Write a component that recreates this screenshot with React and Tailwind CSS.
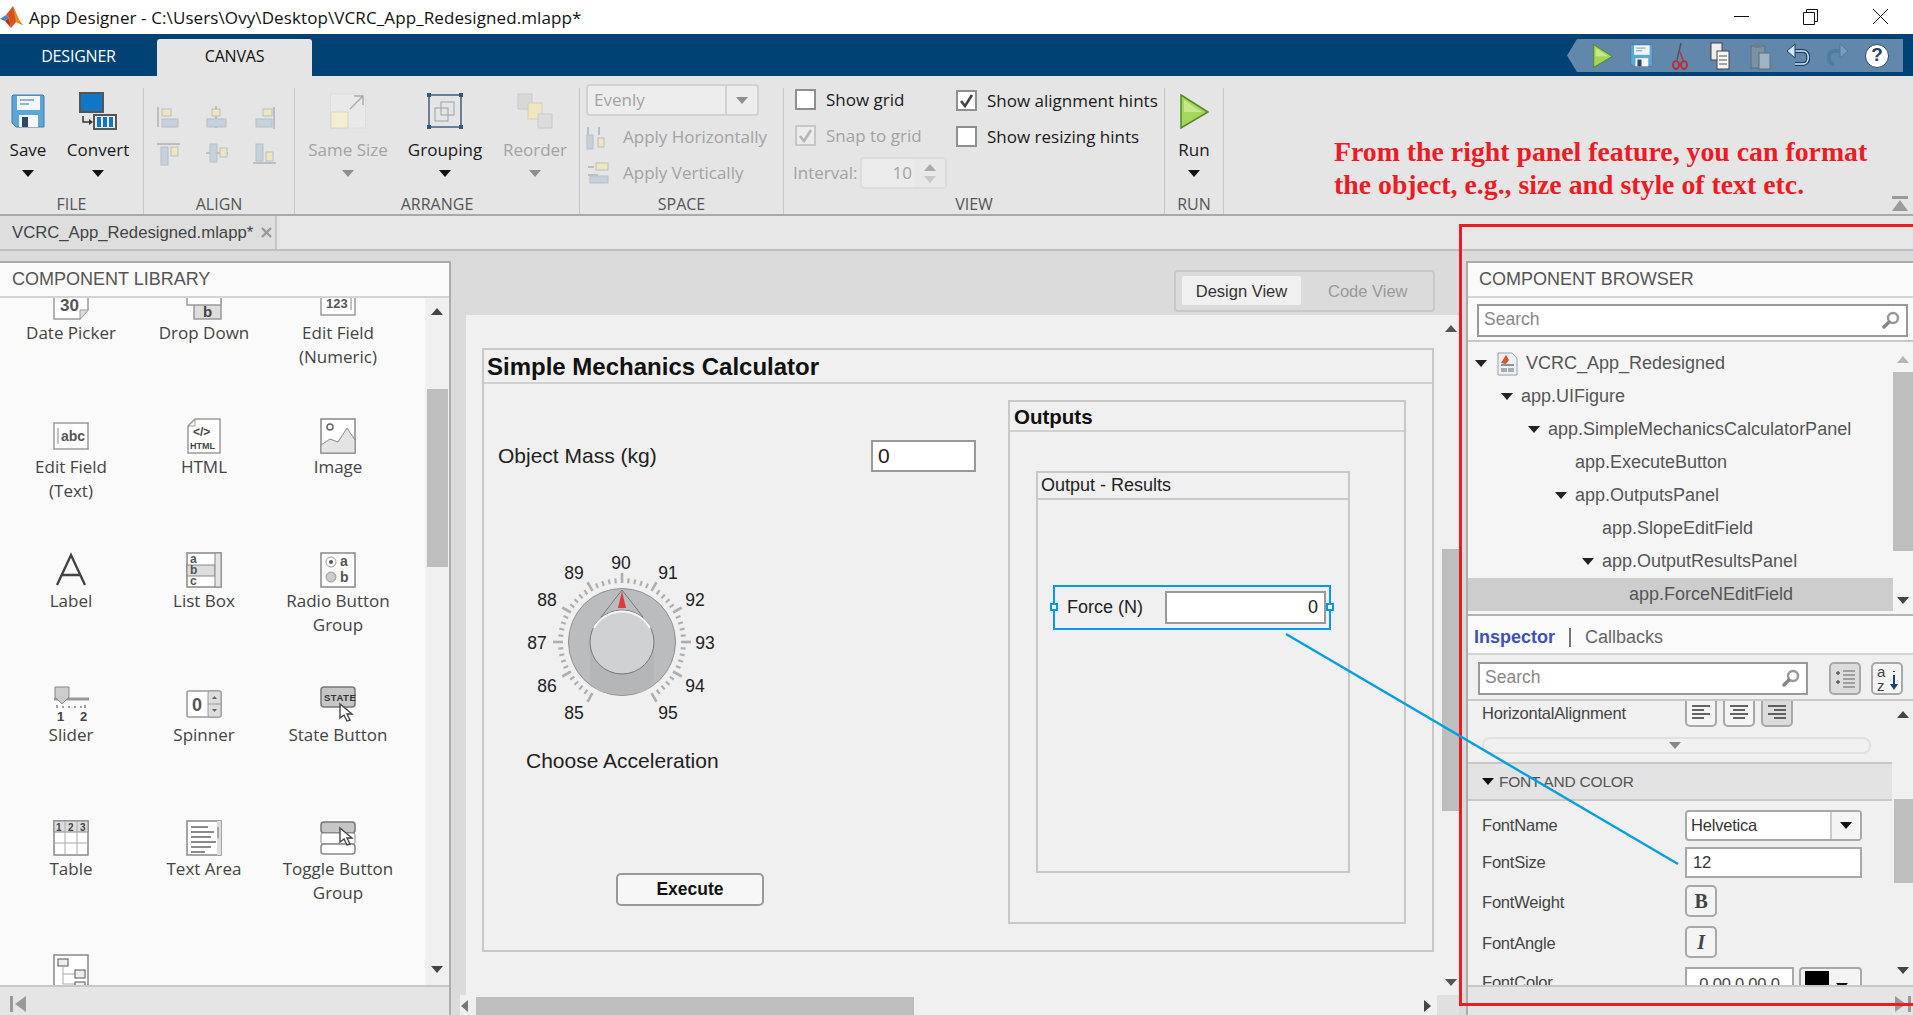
import React from "react";

const Tri = ({ dir = "down", color = "#111", className = "" }) => {
  const pts = { down: "0,0 12,0 6,7", up: "0,7 12,7 6,0", left: "7,0 7,12 0,6", right: "0,0 0,12 7,6" };
  const vertical = dir === "down" || dir === "up";
  return (
    <svg className={`block shrink-0 ${className}`} width={vertical ? 12 : 7} height={vertical ? 7 : 12}>
      <polygon points={pts[dir]} fill={color} />
    </svg>
  );
};

const SearchGlass = () => (
  <svg width="18" height="18" viewBox="0 0 18 18" className="shrink-0">
    <circle cx="11" cy="7" r="5" fill="none" stroke="#999" strokeWidth="2.5" />
    <line x1="7" y1="11" x2="2" y2="16" stroke="#888" strokeWidth="3.5" strokeLinecap="round" />
  </svg>
);

const MatlabLogo = () => (
  <svg width="24" height="24" viewBox="0 0 24 24">
    <polygon points="0,14 6,10 9,13 5,16" fill="#4b86c5" />
    <polygon points="6,10 13,1 19,15 23,20 16,17 11,23 9,13" fill="#d9531e" />
    <polygon points="13,1 19,15 23,20 16,17" fill="#f08a24" />
    <polygon points="9,13 11,23 5,16" fill="#a93a14" />
  </svg>
);

const SaveIcon = ({ size = 34 }) => (
  <svg width={size} height={size} viewBox="0 0 34 34">
    <path d="M2 1h30l1 1v31H5l-4-4V2z" fill="#5da6d6" stroke="#3f7aa6" />
    <rect x="6" y="2" width="23" height="14" fill="#f2f6fa" />
    <rect x="9" y="5" width="14" height="2" fill="#8fb4d0" />
    <rect x="9" y="9" width="9" height="2" fill="#8fb4d0" />
    <rect x="8" y="21" width="19" height="12" fill="#f5f7f9" />
    <rect x="11" y="23" width="6" height="10" fill="#2f4a62" />
  </svg>
);

const ConvertIcon = () => (
  <svg width="38" height="38" viewBox="0 0 38 38">
    <rect x="1" y="1" width="23" height="19" fill="#1077c8" stroke="#555" strokeWidth="2" />
    <rect x="15" y="23" width="22" height="14" fill="#eee" stroke="#555" strokeWidth="2" />
    <rect x="18" y="25" width="4" height="10" fill="#1077c8" />
    <rect x="24" y="25" width="4" height="10" fill="#1077c8" />
    <rect x="30" y="25" width="4" height="10" fill="#1077c8" />
    <path d="M4 24v6h7" fill="none" stroke="#333" strokeWidth="1.5" />
    <polygon points="10,27 14,30 10,33" fill="#333" />
  </svg>
);

const AlignIcon = ({ kind }) => {
  const y = "#efe6bf";
  const b = "#c5d2de";
  const g = "#adb2b7";
  const e = "#b8bfc6";
  const shapes = {
    a: [["l", 2, 2, 2, 22], ["r", 6, 4, 9, 7, y], ["r", 6, 14, 16, 8, b]],
    b: [["l", 12, 1, 12, 23], ["r", 8, 4, 8, 7, y], ["r", 3, 14, 19, 8, b]],
    c: [["l", 22, 2, 22, 24], ["r", 11, 4, 9, 7, y], ["r", 4, 14, 16, 8, b]],
    d: [["l", 1, 2, 24, 2], ["r", 5, 5, 7, 18, b], ["r", 15, 5, 7, 9, y]],
    e: [["l", 2, 11, 24, 11], ["r", 6, 2, 7, 18, b], ["r", 16, 6, 7, 9, y]],
    f: [["l", 1, 21, 24, 21], ["r", 4, 2, 7, 17, b], ["r", 14, 10, 7, 9, y]],
    h: [["l", 2, 2, 2, 10], ["l", 13, 2, 13, 10], ["r", 1, 10, 6, 14, b], ["r", 12, 13, 6, 9, y]],
    v: [["l", 2, 6, 8, 6], ["l", 2, 14, 12, 14], ["r", 10, 2, 12, 7, y], ["r", 4, 15, 18, 7, b]],
  };
  return (
    <svg width="25" height="25" viewBox="0 0 25 25">
      {shapes[kind].map((s, i) =>
        s[0] === "l" ? (
          <line key={i} x1={s[1]} y1={s[2]} x2={s[3]} y2={s[4]} stroke={g} strokeWidth="1.5" />
        ) : (
          <rect key={i} x={s[1]} y={s[2]} width={s[3]} height={s[4]} fill={s[5]} stroke={e} />
        )
      )}
    </svg>
  );
};

const SameSizeIcon = () => (
  <svg width="36" height="36" viewBox="0 0 36 36">
    <rect x="0.5" y="1" width="35" height="34" fill="#e9e9e9" stroke="#dedede" />
    <rect x="1" y="19" width="17" height="16" fill="#f3eed2" stroke="#d9d5be" />
    <path d="M20 16 33 3M24 3h9v9" fill="none" stroke="#a9a9a9" strokeWidth="1.4" />
  </svg>
);

const GroupingIcon = () => (
  <svg width="36" height="36" viewBox="0 0 36 36">
    <rect x="2" y="2" width="32" height="32" fill="none" stroke="#4b6786" strokeWidth="1.6" />
    <rect x="14" y="9" width="13" height="13" fill="none" stroke="#98a2ad" />
    <rect x="8" y="15" width="13" height="13" fill="none" stroke="#98a2ad" />
    <rect x="0" y="0" width="4" height="4" fill="#33567f" />
    <rect x="32" y="0" width="4" height="4" fill="#33567f" />
    <rect x="0" y="32" width="4" height="4" fill="#33567f" />
    <rect x="32" y="32" width="4" height="4" fill="#33567f" />
  </svg>
);

const ReorderIcon = () => (
  <svg width="36" height="36" viewBox="0 0 36 36">
    <rect x="1" y="1" width="14" height="15" fill="#d8d8d8" stroke="#c9c9c9" />
    <rect x="11" y="10" width="14" height="16" fill="#efe6bf" stroke="#d5d0b6" />
    <rect x="21" y="21" width="14" height="14" fill="#dcdcdc" stroke="#c9c9c9" />
  </svg>
);

const PlayIcon = ({ w = 29, h = 35 }) => (
  <svg width={w} height={h} viewBox="0 0 29 35">
    <polygon points="1,1 28,18 1,34" fill="#a5d65a" stroke="#4f8a2b" strokeWidth="1.5" />
    <polygon points="4,6 22,18 4,18" fill="#c6e88a" />
  </svg>
);

const QuickAccess = () => (
  <div className="flex h-[33px] w-[336px] items-center bg-[#6188aa] [clip-path:polygon(10px_0,100%_0,100%_100%,10px_100%,0_50%)]">
    <div className="ml-[26px]"><PlayIcon w={20} h={28} /></div>
    <div className="ml-[17px]"><SaveIcon size={23} /></div>
    <svg className="ml-[19px]" width="16" height="28" viewBox="0 0 16 28">
      <line x1="9" y1="1" x2="5" y2="18" stroke="#555" strokeWidth="1.5" />
      <line x1="8" y1="10" x2="11" y2="18" stroke="#c22b3a" strokeWidth="1.5" />
      <ellipse cx="4" cy="23" rx="3" ry="4" fill="none" stroke="#c22b3a" strokeWidth="2" />
      <ellipse cx="12" cy="23" rx="3" ry="4" fill="none" stroke="#c22b3a" strokeWidth="2" />
    </svg>
    <svg className="ml-[22px]" width="20" height="28" viewBox="0 0 20 28">
      <rect x="1" y="1" width="11" height="17" fill="#eee" stroke="#444" />
      <rect x="7" y="9" width="12" height="18" fill="#f6f6f6" stroke="#444" />
      <path d="M9 14h8M9 18h8M9 22h8" stroke="#555" />
    </svg>
    <svg className="ml-[20px] opacity-50" width="21" height="28" viewBox="0 0 21 28">
      <rect x="1" y="4" width="14" height="22" fill="#9a9a9a" stroke="#555" />
      <rect x="5" y="1" width="6" height="5" fill="#777" />
      <rect x="9" y="11" width="11" height="16" fill="#ddd" stroke="#555" />
    </svg>
    <svg className="ml-[16px]" width="23" height="26" viewBox="0 0 23 26">
      <path d="M4 8h12c7 0 7 13 0 13H8" fill="none" stroke="#1d3f63" strokeWidth="4" />
      <path d="M4 8h12c7 0 7 13 0 13H8" fill="none" stroke="#d6e8f7" strokeWidth="1.5" />
      <polygon points="8,1 8,15 0,8" fill="#d6e8f7" stroke="#1d3f63" />
    </svg>
    <svg className="ml-[16px] opacity-50" width="22" height="26" viewBox="0 0 22 26">
      <path d="M18 8H8c-7 0-7 13 0 13" fill="none" stroke="#3f6f96" strokeWidth="4" />
      <polygon points="14,1 14,15 22,8" fill="#8fb2cc" stroke="#3f6f96" />
    </svg>
    <div className="ml-[17px] flex h-[24px] w-[24px] items-center justify-center rounded-full border border-[#2a4560] bg-white font-['Liberation_Sans',sans-serif] text-[19px] font-bold text-[#2d3e5c]">
      ?
    </div>
  </div>
);

const RibbonGroup = ({ label, className, children }) => (
  <div className={`flex h-[126px] shrink-0 flex-col border-r border-[#c8c8c8] ${className}`}>
    <div className="h-[106px]">{children}</div>
    <div className="text-center text-[16px] leading-[20px] text-[#555]">{label}</div>
  </div>
);

const BigButton = ({ icon, label, caret = true, disabled, className }) => (
  <div className={`flex shrink-0 flex-col items-center pt-[5px] ${className}`}>
    <div className="flex h-[36px] items-center justify-center">{icon}</div>
    <div className={`mt-[9px] h-[24px] text-[17px] leading-[24px] whitespace-nowrap ${disabled ? "text-[#a3a3a3]" : "text-[#1a1a1a]"}`}>
      {label}
    </div>
    {caret && <Tri className="mt-[8px]" color={disabled ? "#8f8f8f" : "#111"} />}
  </div>
);

const Check = ({ checked, disabled, label, className }) => (
  <div className={`flex h-[21px] items-center gap-[10px] ${className}`}>
    <div className={`flex h-[21px] w-[21px] items-center justify-center border-2 ${disabled ? "border-[#c6c6c6] bg-[#ececec]" : "border-[#8f8f8f] bg-white"}`}>
      {checked && (
        <svg width="15" height="15" viewBox="0 0 15 15">
          <path d="M2 8l4 5 7-11" fill="none" stroke={disabled ? "#b5b5b5" : "#444"} strokeWidth="2.6" />
        </svg>
      )}
    </div>
    <span className={`text-[17px] whitespace-nowrap ${disabled ? "text-[#a3a3a3]" : "text-[#1a1a1a]"}`}>{label}</span>
  </div>
);

const Ribbon = () => (
  <div className="flex h-[140px] shrink-0 border-b-2 border-[#a9a9a9] bg-[#e5e5e5] pt-[12px] font-['Open_Sans',sans-serif]">
    <RibbonGroup label="FILE" className="w-[144px]">
      <div className="flex">
        <BigButton className="w-[56px]" icon={<SaveIcon />} label="Save" />
        <BigButton className="w-[84px]" icon={<ConvertIcon />} label="Convert" />
      </div>
    </RibbonGroup>
    <RibbonGroup label="ALIGN" className="w-[151px]">
      <div className="grid grid-cols-[48px_48px_48px] justify-items-center gap-y-[12px] pt-[17px]">
        {["a", "b", "c", "d", "e", "f"].map((k) => (
          <AlignIcon key={k} kind={k} />
        ))}
      </div>
    </RibbonGroup>
    <RibbonGroup label="ARRANGE" className="w-[285px]">
      <div className="flex pl-[5px]">
        <BigButton className="w-[96px]" icon={<SameSizeIcon />} label="Same Size" disabled />
        <BigButton className="w-[98px]" icon={<GroupingIcon />} label="Grouping" />
        <BigButton className="w-[82px]" icon={<ReorderIcon />} label="Reorder" disabled />
      </div>
    </RibbonGroup>
    <RibbonGroup label="SPACE" className="w-[204px]">
      <div className="-mt-[4px] pl-[6px] text-[17px] text-[#a3a3a3]">
        <div className="flex h-[32px] w-[173px] items-stretch rounded-[4px] border-2 border-[#d2d2d2] bg-[#ededed]">
          <span className="w-[137px] pl-[6px] leading-[28px]">Evenly</span>
          <div className="flex flex-1 items-center justify-center border-l-2 border-[#d2d2d2]">
            <Tri color="#8f8f8f" />
          </div>
        </div>
        <div className="mt-[9px] flex h-[24px] items-center gap-[12px] whitespace-nowrap">
          <AlignIcon kind="h" />
          <span>Apply Horizontally</span>
        </div>
        <div className="mt-[12px] flex h-[24px] items-center gap-[12px] whitespace-nowrap">
          <AlignIcon kind="v" />
          <span>Apply Vertically</span>
        </div>
      </div>
    </RibbonGroup>
    <RibbonGroup label="VIEW" className="w-[381px]">
      <div className="flex pl-[11px]">
        <div className="w-[161px] pt-[1px]">
          <Check label="Show grid" />
          <Check label="Snap to grid" checked disabled className="mt-[15px]" />
          <div className="mt-[11px] -ml-[2px] flex items-center text-[17px] text-[#a3a3a3]">
            <span className="w-[67px]">Interval:</span>
            <div className="flex h-[32px] w-[87px] rounded-[4px] border-2 border-[#dcdcdc] bg-[#ebebeb]">
              <span className="w-[53px] pr-[3px] text-right leading-[28px]">10</span>
              <div className="flex flex-1 flex-col items-center justify-center gap-[5px] bg-[#e8e8e8]">
                <Tri dir="up" color="#a9a9a9" />
                <Tri color="#c8c8c8" />
              </div>
            </div>
          </div>
        </div>
        <div className="pt-[2px]">
          <Check label="Show alignment hints" checked />
          <Check label="Show resizing hints" className="mt-[15px]" />
        </div>
      </div>
    </RibbonGroup>
    <RibbonGroup label="RUN" className="w-[59px]">
      <BigButton icon={<PlayIcon />} label="Run" />
    </RibbonGroup>
    <div className="relative flex-1 pt-[47px] pl-[110px] font-['Liberation_Serif',serif] text-[27.8px] leading-[33px] font-bold text-[#ed1c24]">
      <div className="whitespace-nowrap">From the right panel feature, you can format</div>
      <div className="whitespace-nowrap">the object, e.g., size and style of text etc.</div>
      <svg className="absolute right-[5px] bottom-[2px]" width="16" height="16" viewBox="0 0 16 16">
        <rect x="0" y="0" width="16" height="3" fill="#9a9a9a" />
        <polygon points="8,4 16,15 0,15" fill="#9a9a9a" />
      </svg>
    </div>
  </div>
);

const IconBox = ({ children }) => (
  <svg width="36" height="36" viewBox="0 0 36 36" className="block font-['Liberation_Sans',sans-serif]">
    {children}
  </svg>
);

const componentItems = [
  {
    label: ["Date Picker"],
    icon: (
      <IconBox>
        <path d="M1 0h34v26l-8 9H1z" fill="#fff" stroke="#9a9a9a" strokeWidth="1.5" />
        <path d="M35 26h-8v9" fill="#ddd" stroke="#9a9a9a" />
        <text x="7" y="27" fontSize="17" fontWeight="700" fill="#555">30</text>
      </IconBox>
    ),
  },
  {
    label: ["Drop Down"],
    icon: (
      <IconBox>
        <rect x="8" y="12" width="27" height="23" fill="#ddd" stroke="#9a9a9a" strokeWidth="1.5" />
        <rect x="1" y="1" width="34" height="20" fill="#fff" stroke="#9a9a9a" strokeWidth="1.5" />
        <text x="17" y="33" fontSize="15" fontWeight="700" fill="#444">b</text>
      </IconBox>
    ),
  },
  {
    label: ["Edit Field", "(Numeric)"],
    icon: (
      <IconBox>
        <rect x="1" y="5" width="34" height="26" fill="#fff" stroke="#9a9a9a" strokeWidth="1.5" />
        <text x="6" y="24" fontSize="13" fontWeight="700" fill="#555">123</text>
        <line x1="31" y1="8" x2="31" y2="26" stroke="#888" />
      </IconBox>
    ),
  },
  {
    label: ["Edit Field", "(Text)"],
    icon: (
      <IconBox>
        <rect x="1" y="5" width="34" height="26" fill="#fff" stroke="#9a9a9a" strokeWidth="1.5" />
        <line x1="5" y1="10" x2="5" y2="26" stroke="#888" />
        <text x="8" y="23" fontSize="14" fontWeight="700" fill="#555">abc</text>
      </IconBox>
    ),
  },
  {
    label: ["HTML"],
    icon: (
      <IconBox>
        <path d="M9 1h25v34H2V8z" fill="#fff" stroke="#9a9a9a" strokeWidth="1.5" />
        <path d="M9 1v7H2" fill="none" stroke="#9a9a9a" />
        <text x="7" y="18" fontSize="12" fontWeight="700" fill="#444">&lt;/&gt;</text>
        <text x="4" y="31" fontSize="9" fontWeight="700" fill="#444">HTML</text>
      </IconBox>
    ),
  },
  {
    label: ["Image"],
    icon: (
      <IconBox>
        <rect x="1" y="1" width="34" height="34" fill="#fff" stroke="#888" strokeWidth="1.5" />
        <path d="M1 27l9-6 8 3 9-14 8 12v13H1z" fill="#e4e4e4" stroke="#888" />
        <circle cx="10" cy="9" r="3" fill="none" stroke="#666" strokeWidth="1.5" />
      </IconBox>
    ),
  },
  {
    label: ["Label"],
    icon: (
      <IconBox>
        <path d="M4 33 18 3l14 30M9 23h18" fill="none" stroke="#444" strokeWidth="2.4" />
      </IconBox>
    ),
  },
  {
    label: ["List Box"],
    icon: (
      <IconBox>
        <rect x="1" y="1" width="34" height="34" fill="#fff" stroke="#888" strokeWidth="1.5" />
        <rect x="1" y="13" width="28" height="11" fill="#ddd" stroke="#888" />
        <rect x="29" y="1" width="6" height="34" fill="#e6e6e6" stroke="#888" />
        <text x="4" y="11" fontSize="12" fontWeight="700" fill="#555">a</text>
        <text x="4" y="22" fontSize="12" fontWeight="700" fill="#555">b</text>
        <text x="4" y="33" fontSize="12" fontWeight="700" fill="#555">c</text>
      </IconBox>
    ),
  },
  {
    label: ["Radio Button", "Group"],
    icon: (
      <IconBox>
        <rect x="1" y="1" width="34" height="34" fill="#fff" stroke="#888" strokeWidth="1.5" />
        <circle cx="11" cy="10" r="5" fill="#fff" stroke="#999" />
        <circle cx="11" cy="10" r="2" fill="#555" />
        <circle cx="11" cy="25" r="5" fill="#ccc" stroke="#999" />
        <text x="20" y="14" fontSize="14" fontWeight="700" fill="#555">a</text>
        <text x="20" y="30" fontSize="14" fontWeight="700" fill="#555">b</text>
      </IconBox>
    ),
  },
  {
    label: ["Slider"],
    icon: (
      <IconBox>
        <line x1="1" y1="13" x2="36" y2="13" stroke="#999" strokeWidth="3" />
        <path d="M2 1h14v10l-7 7-7-7z" fill="#ccc" stroke="#888" />
        <path d="M4 19v3M10 20v2M16 20v2M22 20v2M28 20v2M32 19v3" stroke="#666" strokeWidth="1.2" />
        <text x="4" y="35" fontSize="13" fontWeight="700" fill="#444">1</text>
        <text x="27" y="35" fontSize="13" fontWeight="700" fill="#444">2</text>
      </IconBox>
    ),
  },
  {
    label: ["Spinner"],
    icon: (
      <IconBox>
        <rect x="1" y="5" width="34" height="26" rx="2" fill="#fff" stroke="#999" strokeWidth="1.5" />
        <rect x="22" y="5" width="13" height="26" rx="2" fill="#ddd" stroke="#999" />
        <line x1="22" y1="18" x2="35" y2="18" stroke="#999" />
        <text x="6" y="25" fontSize="18" fontWeight="700" fill="#555">0</text>
        <polygon points="26,13 31,13 28.5,10" fill="#666" />
        <polygon points="26,23 31,23 28.5,26" fill="#666" />
      </IconBox>
    ),
  },
  {
    label: ["State Button"],
    icon: (
      <IconBox>
        <rect x="1" y="1" width="34" height="20" rx="3" fill="#c6c6c6" stroke="#777" strokeWidth="1.5" />
        <text x="4" y="15" fontSize="9.5" fontWeight="700" letterSpacing="0.5" fill="#333">STATE</text>
        <path d="M20 18v14l4-3 3 6 3-1-3-6h5z" fill="#fff" stroke="#444" strokeWidth="1.4" />
      </IconBox>
    ),
  },
  {
    label: ["Table"],
    icon: (
      <IconBox>
        <rect x="1" y="1" width="34" height="34" fill="#fff" stroke="#888" strokeWidth="1.5" />
        <rect x="1" y="1" width="34" height="11" fill="#ddd" stroke="#888" />
        <path d="M12 1v34M24 1v34M1 23h34" stroke="#aaa" />
        <text x="3" y="11" fontSize="10" fontWeight="700" fill="#444">1</text>
        <text x="15" y="11" fontSize="10" fontWeight="700" fill="#444">2</text>
        <text x="27" y="11" fontSize="10" fontWeight="700" fill="#444">3</text>
      </IconBox>
    ),
  },
  {
    label: ["Text Area"],
    icon: (
      <IconBox>
        <rect x="1" y="1" width="34" height="34" fill="#fff" stroke="#888" strokeWidth="1.5" />
        <rect x="31" y="1" width="4" height="34" fill="#ddd" />
        <path d="M5 7h17M5 12h23M5 17h20M5 22h25M5 27h20M5 32h14" stroke="#666" strokeWidth="1.5" />
        <line x1="32" y1="7" x2="32" y2="18" stroke="#999" strokeWidth="1.5" />
      </IconBox>
    ),
  },
  {
    label: ["Toggle Button", "Group"],
    icon: (
      <IconBox>
        <rect x="1" y="2" width="34" height="11" rx="3" fill="#c6c6c6" stroke="#777" strokeWidth="1.5" />
        <rect x="1" y="13" width="34" height="11" rx="2" fill="#fff" stroke="#888" />
        <rect x="1" y="24" width="34" height="10" rx="3" fill="#fff" stroke="#888" strokeWidth="1.5" />
        <path d="M20 8v14l4-3 3 6 3-1-3-6h5z" fill="#fff" stroke="#444" strokeWidth="1.4" />
      </IconBox>
    ),
  },
  {
    label: [""],
    icon: (
      <IconBox>
        <rect x="1" y="1" width="34" height="34" fill="#fff" stroke="#888" strokeWidth="1.5" />
        <rect x="5" y="5" width="10" height="7" fill="#eee" stroke="#555" />
        <path d="M10 12v18M10 20h12M10 30h12" stroke="#aaa" />
        <rect x="22" y="16" width="10" height="8" fill="#eee" stroke="#555" />
        <rect x="22" y="28" width="10" height="7" fill="#eee" stroke="#555" />
      </IconBox>
    ),
  },
];

const ComponentLibrary = () => (
  <div className="flex w-[451px] shrink-0 flex-col mt-[10px] border-t-2 border-r-2 border-[#acacac] bg-[#fafafa]">
    <div className="h-[35px] shrink-0 border-b-2 border-[#d4d4d4] pl-[12px] font-['Liberation_Sans',sans-serif] text-[18px] leading-[32px] text-[#555]">
      COMPONENT LIBRARY
    </div>
    <div className="flex min-h-0 flex-1">
      <div className="flex-1 overflow-hidden">
        <div className="-mt-[14px] grid grid-cols-[142px_124px_144px] font-['Open_Sans',sans-serif] text-[17px] leading-[24px] text-[#444]">
          {componentItems.map((item, i) => (
            <div key={i} className="flex h-[134px] flex-col items-center">
              {item.icon}
              <div className="mt-[1px] text-center whitespace-nowrap">
                {item.label.map((l) => (
                  <div key={l}>{l}</div>
                ))}
              </div>
            </div>
          ))}
        </div>
      </div>
      <div className="flex w-[24px] shrink-0 flex-col items-center bg-[#f0f0f0] pt-[10px] pb-[12px]">
        <Tri dir="up" color="#444" />
        <div className="mt-[74px] h-[178px] w-[21px] bg-[#bebebe]" />
        <Tri className="mt-auto" color="#444" />
      </div>
    </div>
    <div className="flex h-[30px] shrink-0 items-center border-t-2 border-[#c8c8c8] bg-[#e5e5e5] pt-[6px] pl-[10px]">
      <svg width="16" height="16" viewBox="0 0 16 16">
        <rect x="0" y="0" width="3" height="16" fill="#999" />
        <polygon points="16,0 16,16 5,8" fill="#999" />
      </svg>
    </div>
  </div>
);

const Knob = () => {
  const cx = 100;
  const cy = 94;
  const labels = [
    [85, 52, 165], [86, 25, 138], [87, 15, 95], [88, 25, 52], [89, 52, 25],
    [90, 99, 15], [91, 146, 25], [92, 173, 52], [93, 183, 95], [94, 173, 138], [95, 146, 165],
  ];
  const ticks = [];
  for (let a = -150; a <= 150; a += 6) {
    const major = a % 30 === 0;
    const r = (a * Math.PI) / 180;
    const r1 = 59;
    const r2 = major ? 69 : 64;
    ticks.push(
      <line
        key={a}
        x1={cx + r1 * Math.sin(r)}
        y1={cy - r1 * Math.cos(r)}
        x2={cx + r2 * Math.sin(r)}
        y2={cy - r2 * Math.cos(r)}
        stroke="#adafb2"
        strokeWidth={major ? 2.6 : 2.2}
      />
    );
  }
  return (
    <svg width="200" height="184" viewBox="0 0 200 184" className="block font-['Liberation_Sans',sans-serif]">
      {ticks}
      <circle cx={cx} cy={cy} r="53.5" fill="#bbbcbe" stroke="#8f9093" />
      <path d="M68 94v38q2 8 12 12q20 4 40 0q10-4 12-12V94z" fill="#b5b6b8" />
      <polygon points="100,42 79,69 121,69" fill="#bbbcbe" stroke="#77787a" />
      <polygon points="100,43 96,60 104,60" fill="#e0393f" />
      <circle cx={cx} cy={cy} r="32" fill="#d0d1d3" stroke="#77787a" />
      <path d="M72 80a32 32 0 0 1 56 0" fill="none" stroke="#f6f6f6" strokeWidth="2" />
      {labels.map(([v, x, y]) => (
        <text key={v} x={x} y={y + 6} textAnchor="middle" fontSize="17.5" fill="#222">
          {v}
        </text>
      ))}
    </svg>
  );
};

const Canvas = () => (
  <div className="min-w-0 flex-1 bg-[#f0f0f0] pt-[33px] pl-[16px]">
    <div className="h-[604px] w-[952px] border-2 border-[#c8c8c8]">
      <div className="h-[34px] border-b-2 border-[#d0d0d0] pl-[3px] text-[24px] leading-[34px] font-bold text-[#111]">
        Simple Mechanics Calculator
      </div>
      <div className="flex">
        <div className="w-[524px] shrink-0">
          <div className="mt-[56px] flex h-[32px] items-center pl-[14px] text-[21px] text-[#222]">
            <span className="w-[373px]">Object Mass (kg)</span>
            <div className="h-[32px] w-[105px] border-2 border-[#999] bg-white pl-[5px] leading-[28px]">0</div>
          </div>
          <div className="mt-[76px] ml-[38px]">
            <Knob />
          </div>
          <div className="mt-[15px] ml-[42px] text-[21px] leading-[28px] text-[#222]">Choose Acceleration</div>
          <div className="mt-[98px] ml-[132px] flex h-[33px] w-[148px] items-center justify-center rounded-[5px] border-2 border-[#999] bg-[#f7f7f7] text-[17.5px] font-bold text-[#111]">
            Execute
          </div>
        </div>
        <div className="mt-[16px] h-[524px] w-[398px] shrink-0 border-2 border-[#c8c8c8]">
          <div className="h-[30px] border-b-2 border-[#d0d0d0] pl-[4px] text-[20.5px] leading-[29px] font-bold text-[#111]">
            Outputs
          </div>
          <div className="mt-[39px] ml-[26px] h-[402px] w-[314px] border-2 border-[#c8c8c8]">
            <div className="h-[27px] border-b-2 border-[#c8c8c8] pl-[3px] text-[18px] leading-[24px] text-[#222]">
              Output - Results
            </div>
            <div className="relative mt-[85px] ml-[15px] flex h-[45px] w-[278px] items-center border-2 border-[#0098f0] pl-[12px] text-[18px] text-[#222]">
              <span className="w-[98px]">Force (N)</span>
              <div className="h-[33px] w-[161px] border-2 border-[#999] bg-white pr-[6px] text-right leading-[29px]">0</div>
              <div className="absolute top-[16px] -left-[5px] h-[8px] w-[8px] border-2 border-[#0098f0] bg-white" />
              <div className="absolute top-[16px] -right-[5px] h-[8px] w-[8px] border-2 border-[#0098f0] bg-white" />
            </div>
          </div>
        </div>
      </div>
    </div>
  </div>
);

const CanvasColumn = () => (
  <div className="flex w-[1008px] shrink-0 flex-col font-['Liberation_Sans',sans-serif]">
    <div className="flex h-[64px] shrink-0 justify-end pt-[19px] pr-[24px]">
      <div className="flex h-[42px] w-[261px] rounded-[4px] border-2 border-[#c8c8c8] pt-[4px] pl-[6px] text-[16.5px] leading-[30px]">
        <div className="h-[29px] w-[119px] rounded-[2px] bg-[#f0f0f0] text-center text-[#333]">Design View</div>
        <div className="ml-[27px] text-[#999]">Code View</div>
      </div>
    </div>
    <div className="flex min-h-0 flex-1 pl-[15px]">
      <Canvas />
      <div className="flex w-[17px] shrink-0 flex-col items-center bg-[#f0f0f0] pt-[10px] pb-[9px]">
        <Tri dir="up" color="#555" />
        <div className="mt-[217px] h-[262px] w-[17px] bg-[#bebebe]" />
        <Tri className="mt-auto" color="#555" />
      </div>
    </div>
    <div className="ml-[9px] flex h-[20px] shrink-0 items-end bg-[#f0f0f0]">
      <Tri dir="left" color="#777" className="mb-[3px] ml-[1px]" />
      <div className="ml-[8px] h-[18px] w-[438px] bg-[#bebebe]" />
      <Tri dir="right" color="#444" className="mb-[3px] ml-[510px]" />
      <div className="ml-[6px] h-[20px] flex-1 bg-[#e0e0e0]" />
    </div>
  </div>
);

const SearchBox = ({ className }) => (
  <div className={`flex h-[33px] items-center justify-between border-2 border-[#999] bg-white pr-[6px] pb-[2px] pl-[5px] text-[17.5px] text-[#888] ${className}`}>
    Search
    <SearchGlass />
  </div>
);

const treeRows = [
  { text: "VCRC_App_Redesigned", pad: "pl-[7px]", caret: true, root: true },
  { text: "app.UIFigure", pad: "pl-[33px]", caret: true },
  { text: "app.SimpleMechanicsCalculatorPanel", pad: "pl-[60px]", caret: true },
  { text: "app.ExecuteButton", pad: "pl-[107px]" },
  { text: "app.OutputsPanel", pad: "pl-[87px]", caret: true },
  { text: "app.SlopeEditField", pad: "pl-[134px]" },
  { text: "app.OutputResultsPanel", pad: "pl-[114px]", caret: true },
  { text: "app.ForceNEditField", pad: "pl-[161px] bg-[#cdcdcd]" },
];

const RootIcon = () => (
  <svg width="21" height="24" viewBox="0 0 21 24" className="mr-[8px] ml-[10px]">
    <path d="M1 1h14l5 5v17H1z" fill="#eef1f4" stroke="#9aa0a6" />
    <path d="M4 11l5-8 3 5-3 4z" fill="#d9531e" />
    <rect x="4" y="12" width="13" height="2" fill="#7f97ad" />
    <rect x="4" y="16" width="6" height="4" fill="#a5adb5" />
    <rect x="11" y="16" width="6" height="4" fill="#a5adb5" />
  </svg>
);

const SmallBtn = ({ active, children, className = "" }) => (
  <div className={`flex h-[32px] w-[32px] shrink-0 items-center justify-center rounded-[5px] border-2 border-[#a8a8a8] ${active ? "bg-[#dcdcdc]" : "bg-[#f4f4f4]"} ${className}`}>
    {children}
  </div>
);

const AlignGlyph = ({ d }) => (
  <svg width="20" height="18" viewBox="0 0 20 18">
    <path d={d} stroke="#333" strokeWidth="1.6" />
  </svg>
);

const Field = ({ label, nudge, className, children }) => (
  <div className={`flex items-center ${className}`}>
    <span className={`w-[203px] shrink-0 whitespace-nowrap ${nudge ? "pt-[2px]" : ""}`}>{label}</span>
    {children}
  </div>
);

const Inspector = () => (
  <div className="flex min-h-0 flex-1">
    <div className="flex-1 overflow-hidden bg-[#f0f0f0] text-[16.5px] tracking-[-0.2px] text-[#444]">
      <div className="flex h-[26px] items-start pl-[14px]">
        <span className="w-[203px] shrink-0 leading-[24px]">HorizontalAlignment</span>
        <div className="-mt-[6px] flex gap-[6px]">
          <SmallBtn><AlignGlyph d="M1 4h18M1 8h12M1 12h18M1 16h12" /></SmallBtn>
          <SmallBtn><AlignGlyph d="M1 4h18M4 8h12M1 12h18M4 16h12" /></SmallBtn>
          <SmallBtn active><AlignGlyph d="M1 4h18M7 8h12M1 12h18M7 16h12" /></SmallBtn>
        </div>
      </div>
      <div className="mt-[10px] ml-[14px] flex h-[17px] w-[389px] items-center justify-center rounded-[8px] border-2 border-[#e0e0e0] pr-[4px]">
        <Tri color="#888" />
      </div>
      <div className="mt-[8px] flex h-[39px] items-center border-y-2 border-[#c8c8c8] bg-[#e3e3e3] pl-[14px] text-[15.5px] text-[#555]">
        <Tri color="#111" className="mr-[5px]" />
        FONT AND COLOR
      </div>
      <div className="pl-[14px]">
        <Field label="FontName" className="mt-[9px] h-[31px]">
          <div className="flex h-[31px] w-[177px] rounded-[4px] border-2 border-[#a8a8a8] bg-white">
            <span className="flex-1 pl-[4px] leading-[27px] text-[#333]">Helvetica</span>
            <div className="flex w-[30px] items-center justify-center border-l-2 border-[#ccc] bg-[#f4f4f4]">
              <Tri color="#111" />
            </div>
          </div>
        </Field>
        <Field label="FontSize" className="mt-[6px] h-[31px]">
          <div className="h-[31px] w-[177px] border-2 border-[#a8a8a8] bg-white pl-[6px] leading-[27px] text-[#333]">12</div>
        </Field>
        <Field label="FontWeight" nudge className="mt-[7px] h-[32px]">
          <SmallBtn><span className="font-['Liberation_Serif',serif] text-[20px] font-bold text-[#444]">B</span></SmallBtn>
        </Field>
        <Field label="FontAngle" nudge className="mt-[9px] h-[32px]">
          <SmallBtn><span className="font-['Liberation_Serif',serif] text-[20px] font-bold text-[#444] italic">I</span></SmallBtn>
        </Field>
        <div className="mt-[9px] flex h-[32px] items-start">
          <span className="w-[203px] shrink-0 leading-[30px]">FontColor</span>
          <div className="h-[32px] w-[109px] border-2 border-[#a8a8a8] bg-white text-center leading-[30px]">0.00 0.00 0</div>
          <div className="ml-[5px] flex h-[32px] w-[63px] rounded-[4px] border-2 border-[#a8a8a8] bg-[#f4f4f4] pt-[2px] pl-[4px]">
            <div className="h-[14px] w-[24px] bg-black" />
            <Tri color="#111" className="mt-[12px] ml-[7px]" />
          </div>
        </div>
      </div>
    </div>
    <div className="flex w-[21px] shrink-0 flex-col items-center bg-[#f0f0f0] pt-[10px] pb-[11px]">
      <Tri dir="up" color="#444" />
      <div className="mt-[81px] ml-[2px] h-[84px] w-[19px] bg-[#bebebe]" />
      <Tri className="mt-auto" color="#444" />
    </div>
  </div>
);

const ComponentBrowser = () => (
  <div className="mt-[10px] ml-[7px] flex w-[447px] shrink-0 flex-col border-t-2 border-l-2 border-[#acacac] bg-[#fafafa] font-['Liberation_Sans',sans-serif]">
    <div className="h-[35px] shrink-0 border-b-2 border-[#d4d4d4] pl-[11px] text-[18px] leading-[32px] text-[#555]">
      COMPONENT BROWSER
    </div>
    <div className="h-[44px] shrink-0 border-b-2 border-[#c8c8c8] pt-[6px] pl-[9px]">
      <SearchBox className="w-[431px]" />
    </div>
    <div className="flex h-[274px] shrink-0 border-b-2 border-[#b4b4b4] bg-[#f5f5f5]">
      <div className="w-[425px] shrink-0 pt-[5px] text-[18px] text-[#555]">
        {treeRows.map((r) => (
          <div key={r.text} className={`flex h-[33px] items-center ${r.pad}`}>
            {r.caret && <Tri color="#222" className={r.root ? "" : "mr-[8px]"} />}
            {r.root && <RootIcon />}
            {r.text}
          </div>
        ))}
      </div>
      <div className="flex flex-1 flex-col items-center pt-[14px] pb-[10px]">
        <Tri dir="up" color="#b5b5b5" />
        <div className="mt-[9px] h-[179px] w-full bg-[#bebebe]" />
        <Tri className="mt-auto" color="#444" />
      </div>
    </div>
    <div className="flex h-[39px] shrink-0 items-center border-b-2 border-[#d4d4d4] pt-[5px] pl-[6px] text-[18px]">
      <span className="font-bold text-[#3f51b5]">Inspector</span>
      <div className="mx-[14px] h-[19px] w-[2px] bg-[#777]" />
      <span className="text-[#666]">Callbacks</span>
    </div>
    <div className="flex h-[46px] shrink-0 items-start border-b-2 border-[#c8c8c8] bg-[#f0f0f0] pt-[7px] pl-[10px]">
      <SearchBox className="w-[330px]" />
      <SmallBtn active className="ml-[21px] h-[33px]">
        <svg width="22" height="22" viewBox="0 0 22 22">
          <path d="M2 5h4M4 3v4M2 14h4M4 12v4" stroke="#555" strokeWidth="1.4" />
          <path d="M9 3h12M9 7h12M9 11h12M9 15h12M9 19h12" stroke="#8a8a8a" strokeWidth="1.6" />
        </svg>
      </SmallBtn>
      <SmallBtn className="ml-[10px] h-[33px]">
        <svg width="26" height="28" viewBox="0 0 26 28" className="font-['Liberation_Sans',sans-serif]">
          <text x="3" y="12" fontSize="15" fill="#444">a</text>
          <text x="3" y="26" fontSize="15" fill="#444">z</text>
          <path d="M20 6v1M20 10v12" stroke="#1d4468" strokeWidth="2" />
          <polygon points="16,19 24,19 20,25" fill="#1d4468" />
        </svg>
      </SmallBtn>
    </div>
    <Inspector />
    <div className="flex h-[30px] shrink-0 items-center justify-end border-t-2 border-[#c8c8c8] bg-[#e5e5e5] pt-[6px] pr-[1px]">
      <svg width="17" height="16" viewBox="0 0 17 16">
        <polygon points="0,0 11,8 0,16" fill="#999" />
        <rect x="13" y="0" width="3" height="16" fill="#999" />
      </svg>
    </div>
  </div>
);

const App = () => (
  <div className="relative flex h-[1015px] w-[1913px] flex-col overflow-hidden bg-[#dbdbdb]">
    <div className="flex h-[34px] shrink-0 items-center bg-white font-['Open_Sans',sans-serif] text-[17px] tracking-[0.1px] text-[#111]">
      <MatlabLogo />
      <span className="ml-[5px] flex-1 pt-[1px]">App Designer - C:\Users\Ovy\Desktop\VCRC_App_Redesigned.mlapp*</span>
      <svg className="mr-[24px]" width="155" height="16" viewBox="0 0 155 16">
        <line x1="0" y1="7.5" x2="15" y2="7.5" stroke="#111" />
        <path d="M69.5 3.5h11v12h-11zM72.5 3.5v-3h11v12h-3" fill="none" stroke="#111" />
        <path d="M139 0l15 15M154 0l-15 15" stroke="#111" />
      </svg>
    </div>
    <div className="flex h-[42px] shrink-0 items-end justify-between bg-[#004274] font-['Open_Sans',sans-serif] text-[16px] tracking-[-0.2px]">
      <div className="flex items-end">
        <div className="flex h-[37px] w-[157px] items-center justify-center pb-[4px] text-white">DESIGNER</div>
        <div className="flex h-[37px] w-[155px] items-center justify-center rounded-t-[3px] bg-[#e5e5e5] pb-[4px] text-[#111]">CANVAS</div>
      </div>
      <div className="mr-[10px] mb-[4px]">
        <QuickAccess />
      </div>
    </div>
    <Ribbon />
    <div className="flex h-[35px] shrink-0 border-b-2 border-[#bfbfbf] bg-[#e6e6e6] font-['Liberation_Sans',sans-serif]">
      <div className="flex w-[277px] items-center border-r-2 border-[#c8c8c8] bg-[#dedede] pl-[12px] text-[16.7px] text-[#444]">
        VCRC_App_Redesigned.mlapp*
        <svg className="ml-[8px]" width="11" height="11" viewBox="0 0 11 11">
          <path d="M1 1l9 9M10 1l-9 9" stroke="#999" strokeWidth="2.4" />
        </svg>
      </div>
    </div>
    <div className="flex min-h-0 flex-1">
      <ComponentLibrary />
      <CanvasColumn />
      <ComponentBrowser />
    </div>

    {/* annotation drawn over the screenshot */}
    <div className="pointer-events-none absolute top-[224px] left-[1459px] h-[782px] w-[470px] border-[3px] border-[#ed1c24]" />
    <svg className="pointer-events-none absolute top-[630px] left-[1280px]" width="400" height="240">
      <line x1="6" y1="4" x2="398" y2="234" stroke="#00a0e0" strokeWidth="2.4" />
    </svg>
  </div>
);

export default App;
